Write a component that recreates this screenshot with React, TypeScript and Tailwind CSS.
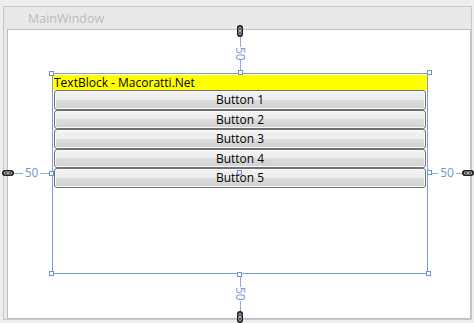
const buttons = [
  { label: "Button 1", h: "h-[20px]" },
  { label: "Button 2", h: "h-[19px]" },
  { label: "Button 3", h: "h-[20px]" },
  { label: "Button 4", h: "h-[19px]" },
  { label: "Button 5", h: "h-[20px]" },
];

function ChainH() {
  return (
    <svg width="12" height="6" viewBox="0 0 12 6" className="block shrink-0">
      <rect x="0" y="0" width="12" height="6" rx="3" fill="#1f1f1f" />
      <rect x="2.2" y="1.9" width="4" height="2.2" rx="1.1" fill="none" stroke="#fff" strokeWidth="0.7" />
      <rect x="5.8" y="1.9" width="4" height="2.2" rx="1.1" fill="none" stroke="#fff" strokeWidth="0.7" />
    </svg>
  );
}

function ChainV() {
  return (
    <svg width="6" height="12" viewBox="0 0 6 12" className="block shrink-0">
      <rect x="0" y="0" width="6" height="12" rx="3" fill="#1f1f1f" />
      <rect x="1.9" y="2.2" width="2.2" height="4" rx="1.1" fill="none" stroke="#fff" strokeWidth="0.7" />
      <rect x="1.9" y="5.8" width="2.2" height="4" rx="1.1" fill="none" stroke="#fff" strokeWidth="0.7" />
    </svg>
  );
}

function Handle({ className }: { className: string }) {
  return <div className={`absolute h-[5px] w-[5px] border border-[#6b8fdb] bg-white ${className}`} />;
}

export default function App() {
  return (
    <div className="relative h-[323px] w-[474px] overflow-hidden bg-[#eeeeee] pb-[3px] pl-[3px] pr-[2px] pt-[6px] font-['Open_Sans',sans-serif]">
      <div className="flex h-full flex-col border border-[#c8c8c8] bg-[#e9e9e9] pl-[3px]">
        <div className="flex h-[22px] shrink-0 items-center pl-[21px] pt-[2px] text-[12.5px] text-[#bababa]">
          MainWindow
        </div>
        <div className="flex-1 border border-[#b4bfd4] bg-white pb-[44px] pl-[44px] pr-[42px] pt-[43px]">
          <div className="flex h-full flex-col border border-[#7d9de0] pt-[1px]">
            <div className="h-[15px] bg-[#ffff00] pl-[1px] text-[12px] leading-[15px] text-black">
              TextBlock - Macoratti.Net
            </div>
            {buttons.map((b) => (
              <div
                key={b.label}
                className={`mx-[1px] flex ${b.h} items-center justify-center rounded-[3px] border border-[#707070] bg-[linear-gradient(to_bottom,#f3f3f3_0%,#ececec_50%,#dddddd_50%,#d0d0d0_100%)] text-[12px] leading-none text-black shadow-[inset_0_0_0_1px_#fafafa]`}
              >
                {b.label}
              </div>
            ))}
          </div>
        </div>
      </div>

      {/* selection handles */}
      <Handle className="left-[49px] top-[71px]" />
      <Handle className="left-[427px] top-[70px]" />
      <Handle className="left-[49px] top-[271px]" />
      <Handle className="left-[426px] top-[271px]" />
      <Handle className="left-[49px] top-[171px]" />
      <Handle className="left-[427px] top-[170px]" />
      <Handle className="left-[238px] top-[70px]" />
      <Handle className="left-[237px] top-[272px]" />
      <div className="absolute left-[237px] top-[170px] h-[5px] w-[5px] border border-[#6b8fdb]" />

      {/* margin adorners */}
      <div className="absolute left-[2px] top-[170px] flex h-[6px] w-[47px] items-center">
        <ChainH />
        <div className="h-px flex-1 bg-[#93a9d9]" />
        <span className="px-[2px] text-[12px] leading-none text-[#7393d6]">50</span>
        <div className="h-px flex-1 bg-[#93a9d9]" />
      </div>
      <div className="absolute left-[432px] top-[170px] flex h-[6px] w-[42px] items-center">
        <div className="h-px flex-1 bg-[#93a9d9]" />
        <span className="px-[2px] text-[12px] leading-none text-[#7393d6]">50</span>
        <div className="h-px flex-1 bg-[#93a9d9]" />
        <ChainH />
      </div>
      <div className="absolute left-[237px] top-[25px] flex h-[45px] w-[6px] flex-col items-center">
        <ChainV />
        <div className="w-px flex-1 bg-[#93a9d9]" />
        <span className="py-[2px] text-[12px] leading-none text-[#7393d6] [writing-mode:vertical-rl]">50</span>
        <div className="w-px flex-1 bg-[#93a9d9]" />
      </div>
      <div className="absolute left-[237px] top-[277px] flex h-[46px] w-[6px] flex-col items-center">
        <div className="w-px flex-1 bg-[#93a9d9]" />
        <span className="py-[2px] text-[12px] leading-none text-[#7393d6] [writing-mode:vertical-rl]">50</span>
        <div className="w-px flex-1 bg-[#93a9d9]" />
        <ChainV />
      </div>
    </div>
  );
}
